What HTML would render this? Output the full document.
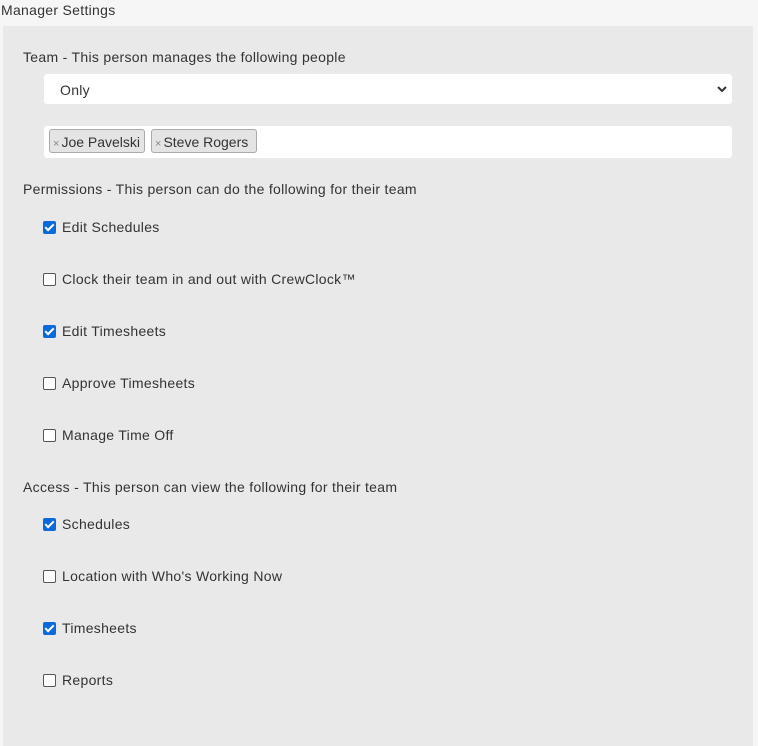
<!DOCTYPE html>
<html><head><style>
body{margin:0;width:758px;height:741px;background:#f6f6f6;font-family:"Liberation Sans",sans-serif;font-size:14px;color:#333;position:relative;overflow:hidden;letter-spacing:0.3px}
.a{position:absolute;white-space:nowrap}
.panel{position:absolute;left:3px;top:26px;width:750px;height:720px;background:#e9e9e9}
.box{position:absolute;left:44px;width:688px;background:#fff;border-radius:3px}
.tag{position:absolute;top:129px;height:24px;border:1px solid #aaa;border-radius:3px;background:#e4e4e4;line-height:24px;font-size:14px;box-sizing:border-box;padding-left:3px;white-space:nowrap;letter-spacing:0}
.tag span{color:#888;font-size:11px;margin-right:2px}
.cb{position:absolute;left:43px;width:13px;height:13px;box-sizing:border-box;border:1px solid #555;border-radius:2px;background:#fff}
.cb.on{background:#0b6ad8;border-color:#0b6ad8}
.cb.on:after{content:"";position:absolute;left:3px;top:0px;width:3px;height:7px;border:solid #fff;border-width:0 2px 2px 0;transform:rotate(45deg)}
.l{position:absolute;left:62px;line-height:16px;white-space:nowrap}
</style></head><body>
<div class="a" style="left:1px;top:1px;line-height:18px">Manager Settings</div>
<div class="panel"></div>
<div class="a" style="left:23px;top:49px;line-height:16px">Team - This person manages the following people</div>
<div class="box" style="top:74px;height:30px"></div>
<div class="a" style="left:60px;top:82px">Only</div>
<svg class="a" style="left:717px;top:85px" width="10" height="8"><path d="M1 2 L5 6 L9 2" fill="none" stroke="#333" stroke-width="2"/></svg>
<div class="box" style="top:126px;height:32px"></div>
<div class="tag" style="left:49px;width:96px"><span>×</span>Joe Pavelski</div>
<div class="tag" style="left:151px;width:106px"><span>×</span>Steve Rogers</div>
<div class="a" style="left:23px;top:181px;line-height:16px">Permissions - This person can do the following for their team</div>
<div class="cb on" style="top:221px"></div><div class="l" style="top:219px">Edit Schedules</div>
<div class="cb" style="top:273px"></div><div class="l" style="top:271px">Clock their team in and out with CrewClock™</div>
<div class="cb on" style="top:325px"></div><div class="l" style="top:323px">Edit Timesheets</div>
<div class="cb" style="top:377px"></div><div class="l" style="top:375px">Approve Timesheets</div>
<div class="cb" style="top:429px"></div><div class="l" style="top:427px">Manage Time Off</div>
<div class="a" style="left:23px;top:479px;line-height:16px">Access - This person can view the following for their team</div>
<div class="cb on" style="top:518px"></div><div class="l" style="top:516px">Schedules</div>
<div class="cb" style="top:570px"></div><div class="l" style="top:568px">Location with Who's Working Now</div>
<div class="cb on" style="top:622px"></div><div class="l" style="top:620px">Timesheets</div>
<div class="cb" style="top:674px"></div><div class="l" style="top:672px">Reports</div>
</body></html>
